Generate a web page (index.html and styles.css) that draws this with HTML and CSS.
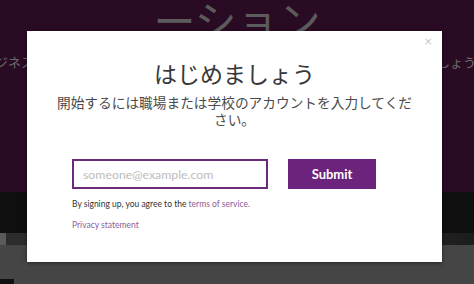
FILE: index.html
```html
<!DOCTYPE html>
<html lang="ja">
<head>
<meta charset="utf-8">
<title>はじめましょう</title>
<link rel="stylesheet" href="styles.css">
</head>
<body>
<div class="page">
  <div class="hero">
    <div class="hero-title">ーション</div>
    <div class="hero-sub">
      <span class="sub-left">ジネス</span>
      <span class="sub-right">しょう</span>
    </div>
  </div>
  <div class="band"></div>
  <div class="strip">
    <span class="tab"></span>
    <span class="tab-dark"></span>
  </div>
  <div class="bottom">
    <span class="chip"></span>
  </div>
</div>

<div class="modal">
  <span class="close">×</span>
  <h1 class="title">はじめましょう</h1>
  <p class="lead">開始するには職場または学校のアカウントを入力してください。</p>
  <form class="form-row">
    <input class="email" type="email" placeholder="someone@example.com">
    <button class="submit" type="button">Submit</button>
  </form>
  <p class="terms">By signing up, you agree to the <a class="link" href="#">terms of service.</a></p>
  <p class="privacy"><a class="link" href="#">Privacy statement</a></p>
</div>
</body>
</html>
```

FILE: styles.css
```css
* { box-sizing: border-box; }
html, body {
  margin: 0;
  padding: 0;
  width: 474px;
  height: 284px;
  overflow: hidden;
  background: #454545;
  font-family: "Lato", "Noto Sans CJK JP", sans-serif;
}
.page {
  display: flex;
  flex-direction: column;
  width: 474px;
  height: 284px;
}
.hero {
  flex: 0 0 192px;
  background: #2a0b24;
  display: flex;
  flex-direction: column;
  align-items: center;
  overflow: hidden;
}
.hero-title {
  font-family: "Noto Sans CJK JP", sans-serif;
  font-size: 42px;
  line-height: 44px;
  margin-top: -3px;
  color: #5b5b5b;
}
.hero-sub {
  width: 474px;
  display: flex;
  justify-content: space-between;
  margin-top: 12px;
  font-family: "Noto Sans CJK JP", sans-serif;
  font-size: 13px;
  line-height: 18px;
  color: #6a6a6a;
}
.sub-left { margin-left: -5px; }
.sub-right { margin-right: -2px; }
.band {
  flex: 0 0 41px;
  background: #0f0f0f;
}
.strip {
  flex: 0 0 12px;
  display: flex;
  background: linear-gradient(90deg, #3a3a3a 0, #3a3a3a 60%, #1c1c1c 100%);
}
.tab {
  width: 6px;
  background: #5a5a5a;
}
.tab-dark {
  width: 22px;
  background: #2c2c2c;
}
.bottom {
  flex: 1;
  background: #454545;
  display: flex;
  flex-direction: column;
  justify-content: flex-end;
}
.chip {
  display: block;
  width: 14px;
  height: 5px;
  background: #111;
}
.modal {
  position: absolute;
  left: 27px;
  top: 31px;
  width: 415px;
  height: 231px;
  background: #fff;
  box-shadow: 0 1px 4px rgba(0,0,0,0.45);
  padding-top: 27px;
  display: flex;
  flex-direction: column;
}
.close {
  position: absolute;
  top: 2px;
  right: 10px;
  font-size: 13px;
  line-height: 16px;
  color: #c4c4c4;
}
.title {
  margin: 0;
  text-align: center;
  font-family: "Noto Sans CJK JP", sans-serif;
  font-weight: 400;
  font-size: 23px;
  line-height: 30px;
  color: #383838;
}
.lead {
  margin: 6px auto 0;
  width: 368px;
  text-align: center;
  font-family: "Noto Sans CJK JP", sans-serif;
  font-size: 13.7px;
  line-height: 17px;
  color: #4a4a4a;
}
.form-row {
  margin: 31px 0 0 45px;
  display: flex;
  gap: 20px;
}
.email {
  width: 196px;
  height: 30px;
  border: 2px solid #6b2a7b;
  padding: 0 0 0 9px;
  font-family: "Lato", sans-serif;
  font-size: 12.3px;
  color: #333;
  outline: none;
}
.email::placeholder { color: #bcbcbc; }
.submit {
  width: 88px;
  height: 30px;
  border: 0;
  background: #6c237b;
  color: #fff;
  font-family: "Lato", sans-serif;
  font-weight: 700;
  font-size: 13px;
  padding: 0;
}
.terms, .privacy {
  margin: 8px 0 0 45px;
  font-size: 8.5px;
  line-height: 14px;
  color: #333;
}
.privacy { margin-top: 7px; }
.link {
  color: #8d5b99;
  text-decoration: none;
}
```
